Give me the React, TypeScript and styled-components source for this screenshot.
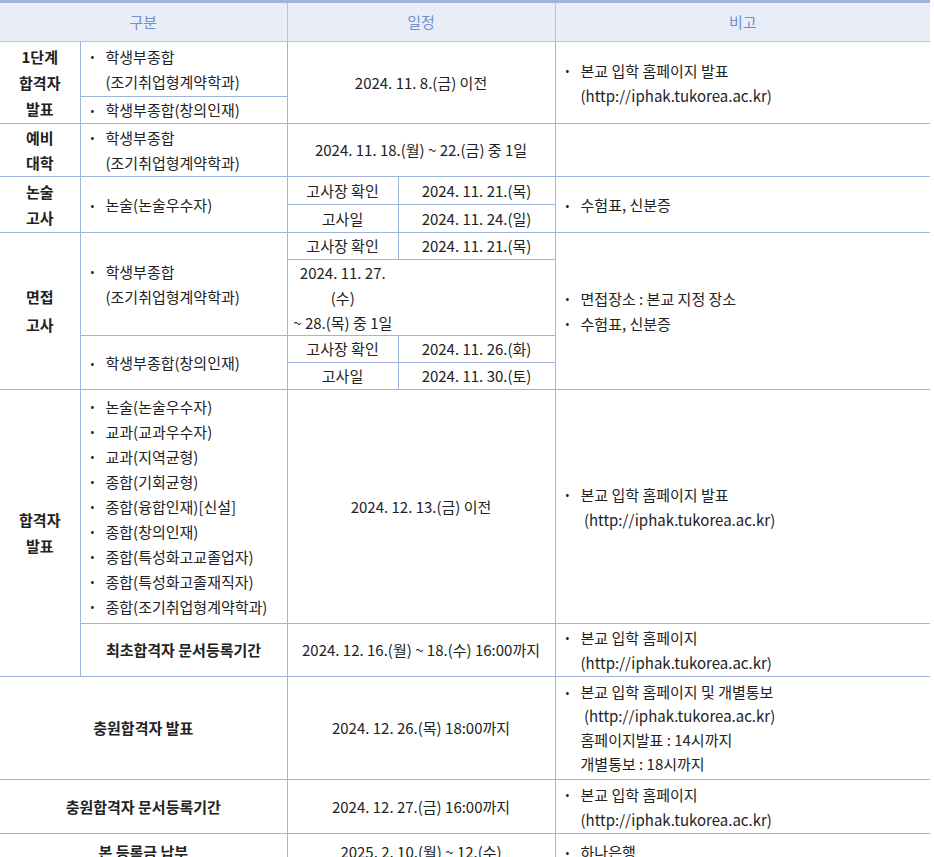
import React from "react";
import styled, { createGlobalStyle } from "styled-components";

const Global = createGlobalStyle`
  body { margin: 0; background: #fff; font-family: "Noto Sans CJK KR", "Noto Sans", sans-serif; color: #222; }
`;

const Table = styled.table`
  width: 930px;
  border-collapse: collapse;
  table-layout: fixed;
  font-size: 15px;
  line-height: 22px;
  border-top: 3px solid #9fb3de;
  border-bottom: 3px solid #9fb3de;
`;

const Th = styled.th`
  background: #e9edf7;
  color: #6f8fd0;
  font-weight: 400;
  font-size: 15px;
  height: 38px;
  padding: 0;
  border: 1px solid #b5c4e6;
  border-top: none;
  &:first-child { border-left: none; }
  &:last-child { border-right: none; }
`;

const Td = styled.td<{ $h?: number; $left?: boolean; $bold?: boolean; $lh?: number }>`
  border: 1px solid #9fb3de;
  text-align: ${(p) => (p.$left ? "left" : "center")};
  font-weight: ${(p) => (p.$bold ? 700 : 400)};
  padding: ${(p) => (p.$left ? "0 6px 0 10px" : "0 4px")};
  height: ${(p) => (p.$h ? p.$h - 1 + "px" : "auto")};
  line-height: ${(p) => (p.$lh ? p.$lh + "px" : "inherit")};
  vertical-align: middle;
  &:first-child { border-left: none; }
  &:last-child { border-right: none; }
`;

const List = styled.ul`
  list-style: none;
  margin: 0;
  padding: 0;
`;

const Li = styled.li`
  position: relative;
  padding-left: 15px;
  &::before {
    content: "•";
    position: absolute;
    left: 0;
    font-size: 11px;
  }
`;

const Bul = ({ items }: { items: React.ReactNode[] }) => (
  <List>
    {items.map((t, i) => (
      <Li key={i}>{t}</Li>
    ))}
  </List>
);

const url = "(http://iphak.tukorea.ac.kr)";

export default function App() {
  return (
    <>
      <Global />
      <Table>
        <colgroup>
          <col style={{ width: 80 }} />
          <col style={{ width: 207 }} />
          <col style={{ width: 111 }} />
          <col style={{ width: 157 }} />
          <col />
        </colgroup>
        <thead>
          <tr>
            <Th colSpan={2}>구분</Th>
            <Th colSpan={2}>일정</Th>
            <Th>비고</Th>
          </tr>
        </thead>
        <tbody>
          <tr>
            <Td $bold rowSpan={2} $lh={26}>1단계<br />합격자<br />발표</Td>
            <Td $left $h={55} $lh={25}><Bul items={[<>학생부종합<br />(조기취업형계약학과)</>]} /></Td>
            <Td colSpan={2} rowSpan={2}>2024. 11. 8.(금) 이전</Td>
            <Td $left rowSpan={2} $lh={25}><Bul items={[<>본교 입학 홈페이지 발표<br />{url}</>]} /></Td>
          </tr>
          <tr>
            <Td $left $h={27}><Bul items={["학생부종합(창의인재)"]} /></Td>
          </tr>
          <tr>
            <Td $bold $lh={25}>예비<br />대학</Td>
            <Td $left $h={53} $lh={25}><Bul items={[<>학생부종합<br />(조기취업형계약학과)</>]} /></Td>
            <Td colSpan={2}>2024. 11. 18.(월) ~ 22.(금) 중 1일</Td>
            <Td />
          </tr>
          <tr>
            <Td $bold rowSpan={2} $lh={26}>논술<br />고사</Td>
            <Td $left rowSpan={2}><Bul items={["논술(논술우수자)"]} /></Td>
            <Td $h={28}>고사장 확인</Td>
            <Td>2024. 11. 21.(목)</Td>
            <Td $left rowSpan={2}><Bul items={["수험표, 신분증"]} /></Td>
          </tr>
          <tr>
            <Td $h={28}>고사일</Td>
            <Td>2024. 11. 24.(일)</Td>
          </tr>
          <tr>
            <Td $bold rowSpan={4} $lh={28}>면접<br />고사</Td>
            <Td $left rowSpan={2} $lh={25}><Bul items={[<>학생부종합<br />(조기취업형계약학과)</>]} /></Td>
            <Td $h={27}>고사장 확인</Td>
            <Td>2024. 11. 21.(목)</Td>
            <Td $left rowSpan={4} $lh={25}><Bul items={["면접장소 : 본교 지정 장소", "수험표, 신분증"]} /></Td>
          </tr>
          <tr>
            <Td $h={54} $lh={25}>2024. 11. 27.(수)<br />~ 28.(목) 중 1일</Td>
          </tr>
          <tr>
            <Td $left rowSpan={2}><Bul items={["학생부종합(창의인재)"]} /></Td>
            <Td $h={27}>고사장 확인</Td>
            <Td>2024. 11. 26.(화)</Td>
          </tr>
          <tr>
            <Td $h={27}>고사일</Td>
            <Td>2024. 11. 30.(토)</Td>
          </tr>
          <tr>
            <Td $bold rowSpan={2} $lh={26}>합격자<br />발표</Td>
            <Td $left $h={234} $lh={25}>
              <Bul items={["논술(논술우수자)", "교과(교과우수자)", "교과(지역균형)", "종합(기회균형)", "종합(융합인재)[신설]", "종합(창의인재)", "종합(특성화고교졸업자)", "종합(특성화고졸재직자)", "종합(조기취업형계약학과)"]} />
            </Td>
            <Td colSpan={2}>2024. 12. 13.(금) 이전</Td>
            <Td $left $lh={25}><Bul items={[<>본교 입학 홈페이지 발표<br />&nbsp;{url}</>]} /></Td>
          </tr>
          <tr>
            <Td $bold $h={53}>최초합격자 문서등록기간</Td>
            <Td colSpan={2}>2024. 12. 16.(월) ~ 18.(수) 16:00까지</Td>
            <Td $left $lh={25}><Bul items={[<>본교 입학 홈페이지<br />{url}</>]} /></Td>
          </tr>
          <tr>
            <Td $bold colSpan={2} $h={103}>충원합격자 발표</Td>
            <Td colSpan={2}>2024. 12. 26.(목) 18:00까지</Td>
            <Td $left $lh={24}><Bul items={[<>본교 입학 홈페이지 및 개별통보<br />&nbsp;{url}<br />홈페이지발표 : 14시까지<br />개별통보 : 18시까지</>]} /></Td>
          </tr>
          <tr>
            <Td $bold colSpan={2} $h={54}>충원합격자 문서등록기간</Td>
            <Td colSpan={2}>2024. 12. 27.(금) 16:00까지</Td>
            <Td $left $lh={25}><Bul items={[<>본교 입학 홈페이지<br />{url}</>]} /></Td>
          </tr>
          <tr>
            <Td $bold colSpan={2} $h={37}>본 등록금 납부</Td>
            <Td colSpan={2}>2025. 2. 10.(월) ~ 12.(수)</Td>
            <Td $left><Bul items={["하나은행"]} /></Td>
          </tr>
        </tbody>
      </Table>
    </>
  );
}
